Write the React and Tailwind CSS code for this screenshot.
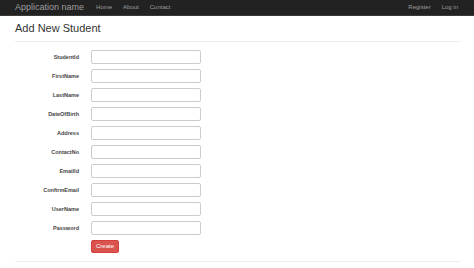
export default function App() {
    const fields = ['StudentId', 'FirstName', 'LastName', 'DateOfBirth', 'Address', 'ContactNo', 'EmailId', 'ConfirmEmail', 'UserName', 'Password'];

    return (
        <div className="w-[474px] h-[268px] bg-white overflow-hidden" style={{ fontFamily: '"Liberation Sans", Arial, sans-serif' }}>
            <div className="h-[16px] bg-[#222222] border-b border-[#3a3a3a] flex items-center px-[15px] text-[#9d9d9d]">
                <span className="text-[9px] mr-[12px]">Application name</span>
                <span className="text-[6px] mr-[11px]">Home</span>
                <span className="text-[6px] mr-[11px]">About</span>
                <span className="text-[6px]">Contact</span>
                <span className="text-[6px] ml-auto mr-[11px]">Register</span>
                <span className="text-[6px] mr-[1px]">Log in</span>
            </div>
            <div className="px-[15px]">
                <h2 className="text-[11px] text-[#333] leading-none mt-[7px]">Add New Student</h2>
                <hr className="border-[#eeeeee] mt-[7px] w-[446px]" />
                <div className="flex flex-col gap-[5px] mt-[8px]">
                    {fields.map(f => (
                        <div key={f} className="flex items-center h-[14px]">
                            <label className="w-[64px] text-right text-[5.5px] font-bold text-[#444]">{f}</label>
                            <input className="ml-[12px] w-[110px] h-[14px] border border-[#cccccc] rounded-[2px]" type="text" />
                        </div>
                    ))}
                    <div className="flex">
                        <button className="ml-[76px] w-[28px] h-[13px] bg-[#d9534f] border border-[#d43f3a] rounded-[2px] text-white text-[6px]">Create</button>
                    </div>
                </div>
                <hr className="border-[#eeeeee] mt-[8px] w-[446px]" />
            </div>
        </div>
    );
}
